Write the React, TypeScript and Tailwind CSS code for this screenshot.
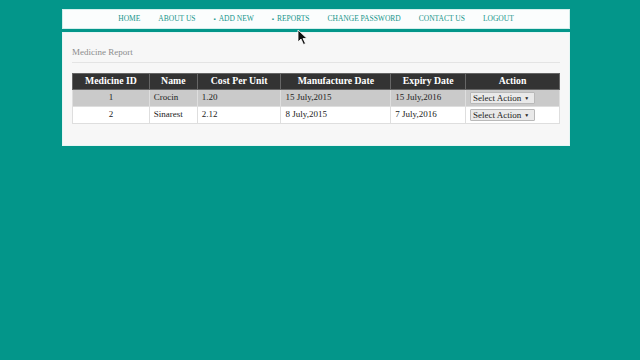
import React from "react";

const navItems = [
  { label: "HOME", bullet: false },
  { label: "ABOUT US", bullet: false },
  { label: "ADD NEW", bullet: true },
  { label: "REPORTS", bullet: true },
  { label: "CHANGE PASSWORD", bullet: false },
  { label: "CONTACT US", bullet: false },
  { label: "LOGOUT", bullet: false },
];

const rows = [
  { id: "1", name: "Crocin", cost: "1.20", mfg: "15 July,2015", exp: "15 July,2016" },
  { id: "2", name: "Sinarest", cost: "2.12", mfg: "8 July,2015", exp: "7 July,2016" },
];

function Select() {
  return (
    <div className="flex h-[12px] w-[65px] items-center justify-between whitespace-nowrap rounded-[1px] border border-[#b9b9b9] bg-[#e9e9e9] pl-[2px] pr-[5px] text-[9px] leading-none text-[#222]">
      <span>Select Action</span>
      <span className="text-[5px]">▼</span>
    </div>
  );
}

export default function App() {
  return (
    <div
      className="relative h-[360px] w-[640px] overflow-hidden bg-[#03968a] pt-[9px]"
      style={{ fontFamily: '"Liberation Serif", "DejaVu Serif", serif' }}
    >
      <div className="ml-[62px] w-[508px]">
        <div className="flex h-[20px] items-center justify-center gap-[18px] border border-[#d4efec] bg-[#fbfdfd] text-[7.5px] text-[#17958b]">
          {navItems.map((n) => (
            <span key={n.label} className="whitespace-nowrap">
              {n.bullet && <span className="mr-[3px] text-[6px]">▪</span>}
              {n.label}
            </span>
          ))}
        </div>
        <div className="h-[3px]" />
        <div className="h-[114px] border border-[#e6f6f4] bg-[#f7f7f7] px-[9px] pt-[13px]">
          <div className="border-b border-[#e4e4e4] pb-[4px] text-[9px] leading-[12px] text-[#8c8c8c]">Medicine Report</div>
          <table className="mt-[10px] w-[488px] border-collapse text-[9px] text-[#222]">
            <thead>
              <tr className="h-[16px] bg-[#333333] text-[9.75px] text-white">
                <th className="w-[77px] border border-[#666] font-bold">Medicine ID</th>
                <th className="w-[48px] border border-[#666] font-bold">Name</th>
                <th className="w-[84px] border border-[#666] font-bold">Cost Per Unit</th>
                <th className="w-[110px] border border-[#666] font-bold">Manufacture Date</th>
                <th className="w-[75px] border border-[#666] font-bold">Expiry Date</th>
                <th className="w-[94px] border border-[#666] font-bold">Action</th>
              </tr>
            </thead>
            <tbody>
              {rows.map((r, i) => (
                <tr key={r.id} className={`h-[17px] ${i === 0 ? "bg-[#cacaca]" : "bg-white"}`}>
                  <td className="border border-[#dedede] text-center">{r.id}</td>
                  <td className="border border-[#dedede] pl-[4px]">{r.name}</td>
                  <td className="border border-[#dedede] pl-[4px]">{r.cost}</td>
                  <td className="border border-[#dedede] pl-[4px]">{r.mfg}</td>
                  <td className="border border-[#dedede] pl-[4px]">{r.exp}</td>
                  <td className="border border-[#dedede] pl-[4px]">
                    <Select />
                  </td>
                </tr>
              ))}
            </tbody>
          </table>
        </div>
      </div>
      <svg className="absolute left-[297px] top-[29px]" width="12" height="17" viewBox="0 0 12 17">
        <path d="M1 1 L1 13 L4 10 L6.5 15.5 L8.5 14.5 L6 9.5 L10 9.5 Z" fill="#111" stroke="#fff" strokeWidth="0.8" />
      </svg>
    </div>
  );
}
